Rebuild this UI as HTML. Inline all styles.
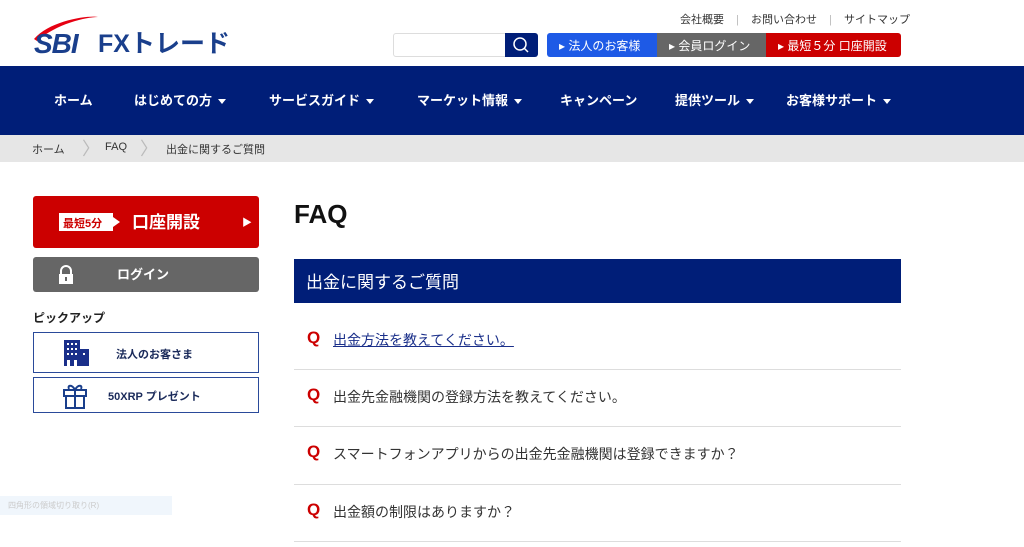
<!DOCTYPE html>
<html><head><meta charset="utf-8"><style>
*{margin:0;padding:0;box-sizing:border-box}
body{width:1024px;height:547px;overflow:hidden;background:#fff;font-family:"Liberation Sans","Noto Sans CJK JP",sans-serif;color:#222;position:relative}
.a{position:absolute}
.nav{top:66px;left:0;width:1024px;height:69px;background:#001e78;color:#fff;font-size:13px;font-weight:bold}
.nav span{position:absolute;top:24px;white-space:nowrap}
.tri{display:inline-block;width:0;height:0;border-left:4px solid transparent;border-right:4px solid transparent;border-top:5px solid #fff;margin-left:6px;vertical-align:middle}
.bc{top:135px;left:0;width:1024px;height:27px;background:#e6e6e6;font-size:11px;color:#333}
.bc span{position:absolute;top:6px}
.q{position:absolute;left:307px;font-size:17px;font-weight:bold;color:#c00}
.qt{position:absolute;left:333px;font-size:14px;color:#333}
.hr{position:absolute;left:294px;width:607px;height:1px;background:#ddd}
</style></head><body>
<svg class="a" style="left:32px;top:12px" width="205" height="44" viewBox="0 0 205 44">
<path d="M2 27 C18 8 58 3 66 5 C54 5 24 12 5 29Z" fill="#e60012"/>
<text x="2" y="41" font-family="Liberation Sans" font-style="italic" font-weight="bold" font-size="28" fill="#1a3f8c" letter-spacing="-1">SBI</text>
<text x="66" y="40" font-family="Liberation Sans,Noto Sans CJK JP" font-weight="bold" font-size="25" fill="#1a3f8c" textLength="132" lengthAdjust="spacingAndGlyphs">FXトレード</text>
</svg>
<div class="a" style="top:11px;left:680px;font-size:11px;color:#333;white-space:nowrap">会社概要 <span style="color:#bbb;margin:0 9px">|</span> お問い合わせ <span style="color:#bbb;margin:0 9px">|</span> サイトマップ</div>
<div class="a" style="left:393px;top:33px;width:113px;height:24px;border:1px solid #ddd;border-radius:3px 0 0 3px"></div>
<div class="a" style="left:505px;top:33px;width:33px;height:24px;background:#001e78;border-radius:0 3px 3px 0"><svg width="33" height="24"><circle cx="15" cy="11" r="6" stroke="#fff" stroke-width="1.5" fill="none"/><line x1="19" y1="15" x2="23" y2="19" stroke="#fff" stroke-width="1.5"/></svg></div>
<div class="a" style="left:547px;top:33px;width:110px;height:24px;background:#1e5ae6;border-radius:3px 0 0 3px;color:#fff;font-size:12px;padding:4px 0 0 12px">▸ 法人のお客様</div>
<div class="a" style="left:657px;top:33px;width:109px;height:24px;background:#666;color:#fff;font-size:12px;padding:4px 0 0 12px">▸ 会員ログイン</div>
<div class="a" style="left:766px;top:33px;width:135px;height:24px;background:#c00;border-radius:0 3px 3px 0;color:#fff;font-size:12px;padding:4px 0 0 12px">▸ 最短５分 口座開設</div>
<div class="a nav">
<span style="left:54px">ホーム</span>
<span style="left:134px">はじめての方<i class="tri"></i></span>
<span style="left:269px">サービスガイド<i class="tri"></i></span>
<span style="left:417px">マーケット情報<i class="tri"></i></span>
<span style="left:560px">キャンペーン</span>
<span style="left:675px">提供ツール<i class="tri"></i></span>
<span style="left:786px">お客様サポート<i class="tri"></i></span>
</div>
<div class="a bc">
<span style="left:32px">ホーム</span><span style="left:82px;color:#bbb;font-size:18px;top:0">〉</span>
<span style="left:105px">FAQ</span><span style="left:140px;color:#bbb;font-size:18px;top:0">〉</span>
<span style="left:166px">出金に関するご質問</span>
</div>
<div class="a" style="left:33px;top:196px;width:226px;height:52px;background:#c00;border-radius:3px;color:#fff">
<div class="a" style="left:26px;top:17px;width:54px;height:18px;background:#fff;color:#c00;font-size:11px;font-weight:bold;padding:2px 0 0 4px">最短5分</div>
<div class="a" style="left:80px;top:21px;border-left:7px solid #fff;border-top:5px solid transparent;border-bottom:5px solid transparent"></div>
<div class="a" style="left:99px;top:12px;font-size:17px;font-weight:bold">口座開設</div>
<div class="a" style="left:209px;top:18px;font-size:10px">▶</div>
</div>
<div class="a" style="left:33px;top:257px;width:226px;height:35px;background:#666;border-radius:3px;color:#fff">
<svg class="a" style="left:24px;top:8px" width="18" height="20"><path d="M4 9V6a5 5 0 0 1 10 0v3" stroke="#fff" stroke-width="2" fill="none"/><rect x="2" y="9" width="14" height="10" fill="#fff"/><rect x="8" y="12" width="2" height="4" fill="#666"/></svg>
<div class="a" style="left:84px;top:7px;font-size:13px;font-weight:bold">ログイン</div>
</div>
<div class="a" style="left:33px;top:309px;font-size:12px;font-weight:bold">ピックアップ</div>
<div class="a" style="left:33px;top:332px;width:226px;height:41px;border:1px solid #2a4a9a">
<svg class="a" style="left:28px;top:6px" width="28" height="28"><rect x="2" y="1" width="16" height="26" fill="#1a2f8a"/><rect x="18" y="10" width="9" height="17" fill="#1a2f8a"/><g fill="#fff"><rect x="5" y="4" width="2" height="2"/><rect x="9" y="4" width="2" height="2"/><rect x="13" y="4" width="2" height="2"/><rect x="5" y="9" width="2" height="2"/><rect x="9" y="9" width="2" height="2"/><rect x="13" y="9" width="2" height="2"/><rect x="5" y="14" width="2" height="2"/><rect x="9" y="14" width="2" height="2"/><rect x="13" y="14" width="2" height="2"/><rect x="21" y="14" width="2" height="2"/><rect x="5" y="21" width="3" height="6"/><rect x="12" y="21" width="3" height="6"/></g></svg>
<div class="a" style="left:82px;top:13px;font-size:11px;font-weight:bold;color:#1a2a5a">法人のお客さま</div>
</div>
<div class="a" style="left:33px;top:377px;width:226px;height:36px;border:1px solid #2a4a9a">
<svg class="a" style="left:28px;top:4px" width="28" height="28"><g stroke="#1a3f8c" stroke-width="2" fill="none"><rect x="2" y="8" width="22" height="6"/><rect x="4" y="14" width="18" height="12"/><line x1="13" y1="8" x2="13" y2="26"/><path d="M13 8c-3-6-8-5-6-1M13 8c3-6 8-5 6-1"/></g></svg>
<div class="a" style="left:74px;top:10px;font-size:11px;font-weight:bold;color:#1a2a5a">50XRP プレゼント</div>
</div>
<div class="a" style="left:0;top:496px;width:172px;height:19px;background:#f0f6fc;color:#ccc;font-size:8px;padding:4px 0 0 8px">四角形の領域切り取り(R)</div>
<div class="a" style="left:294px;top:199px;font-size:26px;font-weight:bold;color:#111">FAQ</div>
<div class="a" style="left:294px;top:259px;width:607px;height:44px;background:#001e78;color:#fff;font-size:17px;padding:9px 0 0 12px">出金に関するご質問</div>
<div class="q" style="top:328px">Q</div><div class="qt" style="top:330px;color:#1a2f8a;text-decoration:underline">出金方法を教えてください。</div>
<div class="hr" style="top:369px"></div>
<div class="q" style="top:385px">Q</div><div class="qt" style="top:387px">出金先金融機関の登録方法を教えてください。</div>
<div class="hr" style="top:426px"></div>
<div class="q" style="top:442px">Q</div><div class="qt" style="top:444px">スマートフォンアプリからの出金先金融機関は登録できますか？</div>
<div class="hr" style="top:484px"></div>
<div class="q" style="top:500px">Q</div><div class="qt" style="top:502px">出金額の制限はありますか？</div>
<div class="hr" style="top:541px"></div>
</body></html>
